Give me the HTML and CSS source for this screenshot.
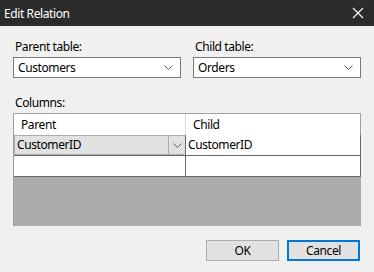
FILE: index.html
```html
<!DOCTYPE html>
<html>
<head>
<meta charset="utf-8">
<link rel="stylesheet" href="styles.css">
</head>
<body>
<div class="dialog">
  <div class="titlebar">
    <span class="title">Edit Relation</span>
    <svg class="close" width="12" height="12" viewBox="0 0 12 12"><path d="M1 1L11 11M11 1L1 11" stroke="#ffffff" stroke-width="1.1" fill="none"/></svg>
  </div>
  <div class="content">
    <div class="pickers">
      <div class="field">
        <div class="label">Parent table:</div>
        <div class="combo"><span class="combo-text">Customers</span><svg class="chev" width="9" height="5" viewBox="0 0 9 5"><path d="M0.5 0.5L4.5 4.5L8.5 0.5" stroke="#5a5a5a" fill="none"/></svg></div>
      </div>
      <div class="field">
        <div class="label">Child table:</div>
        <div class="combo"><span class="combo-text">Orders</span><svg class="chev" width="9" height="5" viewBox="0 0 9 5"><path d="M0.5 0.5L4.5 4.5L8.5 0.5" stroke="#5a5a5a" fill="none"/></svg></div>
      </div>
    </div>
    <div class="label columns-label">Columns:</div>
    <div class="grid">
      <div class="row header">
        <div class="cell">Parent</div>
        <div class="cell">Child</div>
      </div>
      <div class="row">
        <div class="cell editcell"><span class="edit-text">CustomerID</span><span class="edit-btn"><svg width="9" height="5" viewBox="0 0 9 5"><path d="M0.5 0.5L4.5 4.5L8.5 0.5" stroke="#5a5a5a" fill="none"/></svg></span></div>
        <div class="cell plain">CustomerID</div>
      </div>
      <div class="row">
        <div class="cell"></div>
        <div class="cell"></div>
      </div>
    </div>
    <div class="buttons">
      <div class="btn">OK</div>
      <div class="btn default">Cancel</div>
    </div>
  </div>
</div>
</body>
</html>
```

FILE: styles.css
```css
html, body {
  margin: 0;
  padding: 0;
  background: #f0f0f0;
}
body {
  font-family: "Noto Sans", "DejaVu Sans", sans-serif;
  font-size: 12px;
  letter-spacing: -0.4px;
  color: #000000;
}
.dialog {
  width: 374px;
  height: 272px;
  background: #f0f0f0;
}
.titlebar {
  height: 26px;
  background: #2b2b2b;
  display: flex;
  align-items: center;
  justify-content: space-between;
  padding: 0 10px 0 4px;
}
.title {
  color: #ffffff;
  font-size: 12px;
}
.close {
  display: block;
}
.content {
  padding: 0 13px;
}
.pickers {
  display: flex;
  gap: 12px;
  padding-top: 12px;
}
.field {
  width: 168px;
}
.label {
  height: 17px;
  line-height: 17px;
  padding-left: 2px;
}
.combo {
  margin-top: 2px;
  height: 19px;
  border: 1px solid #7a7a7a;
  background: #ffffff;
  display: flex;
  align-items: center;
  justify-content: space-between;
  padding: 0 7px 0 4px;
}
.combo-text {
  line-height: 19px;
}
.chev {
  display: block;
}
.columns-label {
  margin-top: 16px;
}
.grid {
  margin-top: 2px;
  height: 113px;
  box-sizing: border-box;
  background: #ababab;
  border-top: 1px solid #a0a0a0;
  border-left: 1px solid #a0a0a0;
}
.row {
  display: flex;
  height: 20px;
  width: 347px;
  background: #ffffff;
  border-bottom: 1px solid #696969;
}
.row.header {
  height: 21px;
  border-bottom: none;
}
.row .cell {
  width: 172px;
  box-sizing: border-box;
  border-right: 1px solid #696969;
  line-height: 20px;
  padding-left: 3px;
}
.row .cell + .cell {
  width: 175px;
}
.row.header .cell {
  border-right: 1px solid #d8d8d8;
  padding-left: 7px;
  line-height: 21px;
}
.row.header .cell + .cell {
  border-right: 1px solid #a0a0a0;
}
.editcell {
  display: flex;
  background: #e1e1e1;
  border: 1px solid #adadad;
  padding-left: 2px !important;
  line-height: 18px !important;
}
.edit-text {
  flex: 1;
}
.edit-btn {
  width: 16px;
  border-left: 1px solid #adadad;
  display: flex;
  align-items: center;
  justify-content: center;
}
.plain {
  padding-left: 2px !important;
}
.buttons {
  display: flex;
  justify-content: flex-end;
  gap: 8px;
  margin-top: 14px;
  padding-right: 1px;
}
.btn {
  width: 73px;
  height: 21px;
  box-sizing: border-box;
  border: 1px solid #adadad;
  background: #e1e1e1;
  text-align: center;
  line-height: 19px;
}
.btn.default {
  border: 2px solid #0078d7;
  line-height: 17px;
}
```
